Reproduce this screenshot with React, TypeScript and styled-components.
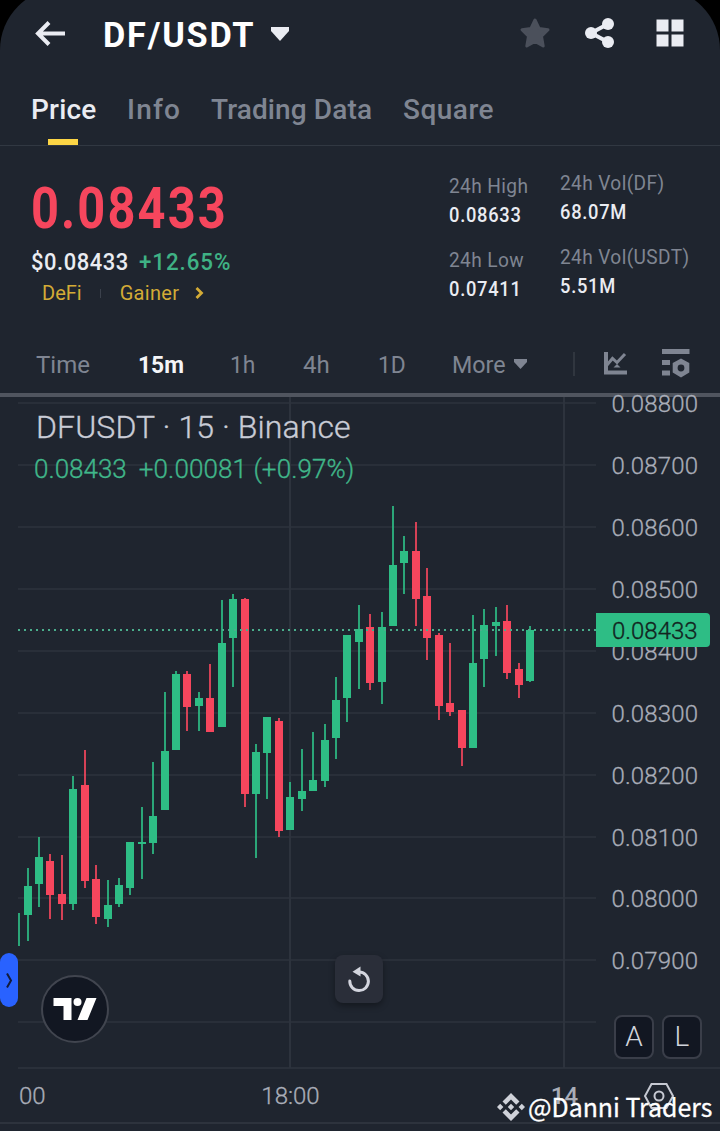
import React from "react";
import styled, { createGlobalStyle } from "styled-components";

const colors = {
  bg: "#1f252f",
  line: "#2d333d",
  text: "#eaecf2",
  muted: "#7f8592",
  axis: "#a9adb8",
  green: "#2ebd85",
  red: "#f6465d",
  yellow: "#fcd545",
  gold: "#d3ab36",
};

const GlobalStyle = createGlobalStyle`
  * { box-sizing: border-box; }
  body { margin: 0; background: #000; }
  svg { display: block; overflow: visible; }
`;

const Root = styled.div`
  width: 720px;
  height: 1131px;
  overflow: hidden;
  background: #000;
  font-family: Roboto, "Liberation Sans", sans-serif;
`;

const Shell = styled.div`
  display: flex;
  flex-direction: column;
  height: 1143px;
  margin-top: -12px;
  padding-top: 12px;
  border-radius: 62px 62px 0 0;
  background: ${colors.bg};
`;

/* Single line label; $stretch narrows or widens the glyphs. */
const Label = styled.span<{
  $size: number;
  $color?: string;
  $weight?: number;
  $spacing?: number;
  $stretch?: number;
}>`
  display: block;
  white-space: pre;
  line-height: 1;
  font-size: ${(p) => p.$size}px;
  color: ${(p) => p.$color ?? colors.text};
  font-weight: ${(p) => p.$weight ?? 400};
  letter-spacing: ${(p) => p.$spacing ?? 0}px;
  transform: scaleX(${(p) => p.$stretch ?? 1});
  transform-origin: left center;
`;

/* Light face with slightly reinforced strokes, used on the chart. */
const ChartLabel = styled(Label)`
  font-weight: 300;
  -webkit-text-stroke: 0.35px currentColor;
`;

const Header = styled.header`
  display: flex;
  align-items: center;
  height: 68px;
  padding: 0 36px 0 34px;
`;

const PairButton = styled.div`
  display: flex;
  align-items: center;
  width: 186px;
  margin-left: 37px;
  justify-content: space-between;
`;

const PairName = styled.div`
  padding-top: 2px;
`;

const HeaderActions = styled.div`
  display: flex;
  align-items: center;
  gap: 34px;
  margin: -2px 0 0 auto;
`;

const GridButton = styled.div`
  margin-left: 7px;
`;

const Tabs = styled.nav`
  display: flex;
  height: 78px;
  padding-left: 31px;
  border-bottom: 1px solid #313842;
`;

const Tab = styled.div<{ $width: number }>`
  display: flex;
  flex-direction: column;
  justify-content: space-between;
  flex: none;
  width: ${(p) => p.$width}px;
  padding-top: 28px;
`;

const Underline = styled.div`
  width: 30px;
  height: 6px;
  margin-left: 17px;
  background: ${colors.yellow};
`;

const Summary = styled.section`
  display: flex;
  height: 186px;
  padding-left: 31px;
`;

const PriceBlock = styled.div`
  width: 418px;
  padding-top: 34px;
`;

const FiatRow = styled.div`
  display: flex;
  margin-top: 13px;
`;

const FiatPrice = styled.div`
  width: 108px;
`;

const TagRow = styled.div`
  display: flex;
  align-items: center;
  margin: 9px 0 0 11px;
`;

const TagDivider = styled.div`
  width: 1px;
  height: 9px;
  margin: 0 19px 0 18px;
  background: #3b414c;
`;

const TagArrow = styled.div`
  margin-left: 16px;
`;

const StatColumn = styled.div<{ $top: number; $width: number }>`
  display: flex;
  flex-direction: column;
  gap: 26px;
  width: ${(p) => p.$width}px;
  padding-top: ${(p) => p.$top}px;
`;

const Stat = styled.div`
  display: flex;
  flex-direction: column;
  gap: 9px;
  height: 48px;
`;

const Intervals = styled.section`
  display: flex;
  align-items: center;
  height: 61px;
  padding: 3px 29px 0 36px;
`;

const Interval = styled.div<{ $width: number }>`
  flex: none;
  width: ${(p) => p.$width}px;
  padding-top: 2px;
`;

const MoreButton = styled.div`
  display: flex;
  align-items: center;
  justify-content: space-between;
  width: 75px;
`;

const MoreText = styled.div`
  padding-top: 2px;
`;

const ToolDivider = styled.div`
  width: 2px;
  height: 24px;
  margin-left: 46px;
  background: #30363f;
`;

const Tools = styled.div`
  display: flex;
  align-items: center;
  justify-content: space-between;
  flex: 1;
  margin: -1px 1px 0 29px;
`;

const Separator = styled.div`
  height: 4px;
  background: #50555f;
  flex: none;
`;

const ChartArea = styled.section`
  position: relative;
  height: 734px;
`;

const Legend = styled.div`
  position: absolute;
  left: 34px;
  top: 14px;
  display: flex;
  flex-direction: column;
  gap: 13px;
`;

const LegendRow = styled.div<{ $indent: number }>`
  display: flex;
  gap: 12px;
  padding-left: ${(p) => p.$indent}px;
`;

const PriceFlag = styled.div`
  position: absolute;
  left: 596px;
  top: 216px;
  display: flex;
  align-items: center;
  width: 114px;
  height: 34px;
  padding: 2px 0 0 16px;
  border-radius: 0 4px 4px 0;
  background: ${colors.green};
`;

const DrawerHandle = styled.div`
  position: absolute;
  left: 0;
  top: 556px;
  display: flex;
  align-items: center;
  justify-content: center;
  width: 18px;
  height: 54px;
  border-radius: 9px;
  background: #2962ff;
`;

const BrandBadge = styled.div`
  position: absolute;
  left: 41px;
  top: 578px;
  display: flex;
  align-items: center;
  justify-content: center;
  width: 68px;
  height: 68px;
  border: 2px solid #41454f;
  border-radius: 50%;
  background: #121722;
`;

const ResetButton = styled.div`
  position: absolute;
  left: 335px;
  top: 558px;
  width: 48px;
  height: 48px;
  border-radius: 8px;
  background: #2a2e39;
  box-shadow: 0 3px 6px rgba(0, 0, 0, 0.35);
`;

const ScaleModes = styled.div`
  position: absolute;
  left: 614px;
  top: 618px;
  display: flex;
  gap: 8px;
`;

const ScaleMode = styled.div`
  display: flex;
  align-items: center;
  justify-content: center;
  width: 40px;
  height: 44px;
  border: 2px solid #3a3e49;
  border-radius: 8px;
  background: #121722;
`;

const Watermark = styled.div`
  position: absolute;
  left: 497px;
  top: 694px;
  display: flex;
  align-items: center;
  gap: 3px;
  height: 32px;
  font-family: "Noto Sans CJK SC", "Noto Sans", sans-serif;
`;

const WatermarkText = styled.div`
  padding-bottom: 2px;
  -webkit-text-stroke: 0.3px #fff;
`;

type Candle = [x: number, high: number, top: number, bottom: number, low: number, up: 0 | 1];

const candles: Candle[] = [
  [28, 868, 886, 915, 941, 1],
  [39, 837, 857, 884, 907, 1],
  [50, 854, 861, 895, 919, 0],
  [62, 855, 894, 904, 920, 0],
  [73, 776, 789, 904, 910, 1],
  [85, 750, 785, 881, 888, 0],
  [96, 865, 879, 917, 924, 0],
  [108, 880, 905, 919, 927, 1],
  [119, 878, 885, 904, 907, 1],
  [130, 842, 842, 888, 895, 1],
  [142, 807, 842, 844, 879, 1],
  [153, 762, 816, 843, 854, 1],
  [165, 692, 751, 810, 810, 1],
  [176, 671, 674, 750, 750, 1],
  [187, 671, 674, 707, 731, 0],
  [199, 692, 698, 706, 731, 1],
  [210, 664, 698, 732, 732, 0],
  [222, 600, 643, 727, 727, 1],
  [233, 594, 599, 638, 687, 1],
  [245, 598, 599, 794, 807, 0],
  [256, 744, 752, 794, 858, 1],
  [267, 717, 717, 753, 799, 1],
  [279, 718, 721, 831, 837, 0],
  [290, 782, 797, 830, 830, 1],
  [302, 749, 791, 799, 811, 1],
  [313, 732, 780, 791, 791, 1],
  [325, 724, 740, 781, 787, 1],
  [336, 677, 700, 738, 759, 1],
  [347, 635, 635, 698, 722, 1],
  [359, 605, 629, 642, 689, 1],
  [370, 614, 627, 683, 690, 0],
  [382, 612, 627, 682, 704, 1],
  [393, 506, 565, 626, 626, 1],
  [404, 536, 551, 563, 594, 1],
  [416, 522, 551, 599, 626, 0],
  [427, 568, 596, 638, 660, 0],
  [439, 633, 635, 706, 720, 0],
  [450, 643, 703, 712, 716, 0],
  [462, 710, 710, 748, 766, 0],
  [473, 615, 663, 748, 748, 1],
  [484, 609, 625, 659, 687, 1],
  [496, 607, 622, 626, 656, 1],
  [507, 605, 621, 673, 679, 0],
  [519, 663, 669, 685, 698, 0],
  [530, 626, 630, 681, 682, 1],
];

const levels: [number, string][] = [
  [403, "0.08800"],
  [465, "0.08700"],
  [527, "0.08600"],
  [589, "0.08500"],
  [651, "0.08400"],
  [713, "0.08300"],
  [775, "0.08200"],
  [837, "0.08100"],
  [898, "0.08000"],
  [960, "0.07900"],
  [1022, ""],
];

const AxisText = styled.text<{ $bold?: boolean }>`
  font-family: Roboto, sans-serif;
  font-size: 24px;
  font-weight: ${(p) => (p.$bold ? 500 : 300)};
  fill: ${colors.axis};
  stroke: ${colors.axis};
  stroke-width: ${(p) => (p.$bold ? 0 : 0.3)}px;
`;

const Chart = () => (
  <svg width="720" height="734" viewBox="0 397 720 734">
    <g fill={colors.line}>
      {levels.map(([y]) => (
        <rect key={y} x="18" y={y - 1} width="578" height="2" opacity="0.75" />
      ))}
      <rect x="289" y="397" width="2" height="671" />
      <rect x="563" y="397" width="2" height="671" />
      <rect x="18" y="1067" width="702" height="2" opacity="0.8" />
      <rect x="0" y="1122" width="720" height="2" />
    </g>
    {levels.map(([y, label]) => (
      <AxisText key={y} x="611.5" y={y + 9} textLength={label ? 86.5 : undefined}>
        {label}
      </AxisText>
    ))}
    <rect x="18" y="913" width="2" height="33" fill={colors.green} opacity="0.85" />
    {candles.map(([x, high, top, bottom, low, up]) => (
      <g key={x} fill={up ? colors.green : colors.red}>
        <rect x={x - 1} y={high} width="2" height={low - high} opacity="0.85" />
        <rect x={x - 4} y={top} width="8" height={bottom - top} />
      </g>
    ))}
    <path d="M18 630H596" stroke="#4aae8c" strokeWidth="2" strokeDasharray="2 4" />
    <AxisText x="19" y="1104">00</AxisText>
    <AxisText x="290.5" y="1104" textAnchor="middle">18:00</AxisText>
    <AxisText $bold x="564.5" y="1104" textAnchor="middle">14</AxisText>
    <g fill="none" stroke="#c6c9d2" strokeWidth="2">
      <path d="M651.5 1084h15l6.500 12-6.500 12h-15l-6.500-12z" />
      <circle cx="659" cy="1096" r="4.500" />
    </g>
  </svg>
);

const BackIcon = () => (
  <svg width="32" height="26" viewBox="0 0 32 26" fill="none" stroke={colors.text} strokeWidth="4">
    <path d="M4 12.500H31M15 1.500L4 12.500L15 23.500" />
  </svg>
);

const StarIcon = () => (
  <svg width="32" height="32" viewBox="0 0 32 32">
    <path
      d="M16 3L20 11.500L29 12.700L22.500 19.300L24.200 29L16 24.500L7.800 29L9.500 19.300L3 12.700L12 11.500Z"
      fill="#4b505b"
      stroke="#4b505b"
      strokeWidth="3"
      strokeLinejoin="round"
    />
  </svg>
);

const ShareIcon = () => (
  <svg width="30" height="32" viewBox="0 0 30 32" fill={colors.text}>
    <path d="M23 7L6 16L23 25" fill="none" stroke={colors.text} strokeWidth="4" />
    <circle cx="23" cy="7" r="6" />
    <circle cx="6" cy="16" r="6" />
    <circle cx="23" cy="25" r="6" />
  </svg>
);

const GridIcon = () => (
  <svg width="28" height="28" viewBox="0 0 28 28" fill={colors.text}>
    <path d="M.500.500h12v12H.500zM15.500.500h12v12h-12zM.500 15.500h12v12H.500zM15.500 15.500h12v12h-12z" />
  </svg>
);

const CaretIcon = ({ width, color }: { width: number; color: string }) => (
  <svg width={width} height={width * 0.78} viewBox="0 0 18 14">
    <path d="M0 0H18V4L9 14L0 4Z" fill={color} />
  </svg>
);

const LineChartIcon = () => (
  <svg width="23" height="23" viewBox="0 0 23 23" fill="none" stroke={colors.muted}>
    <path d="M2 0V20.500H23" strokeWidth="4" />
    <path d="M3 13L8.500 6.500L13 10.500L21 2" strokeWidth="3" />
    <path d="M9.500 15.500L13 12L16.500 15.500Z" fill={colors.muted} stroke="none" />
  </svg>
);

const SettingsIcon = () => (
  <svg width="29" height="29" viewBox="0 0 29 29" fill={colors.muted}>
    <path d="M1 0h27.500v5H1zM1 11h8v5H1zM1 21.500h8v5H1z" />
    <path
      fillRule="evenodd"
      d="M20 9.500L28.300 14V23.500L20 28.500L11.700 23.500V14ZM20 15.600A3.400 3.400 0 1 0 20 22.400A3.400 3.400 0 1 0 20 15.600Z"
    />
  </svg>
);

const ChevronIcon = () => (
  <svg width="9" height="12" viewBox="0 0 9 12" fill="none" stroke={colors.gold} strokeWidth="2.800">
    <path d="M1.500 1L6.500 6L1.500 11" />
  </svg>
);

const HandleArrow = () => (
  <svg width="6" height="15" viewBox="0 0 6 15" fill="none" stroke="#131c3c" strokeWidth="2">
    <path d="M1 .500L5 7.500L1 14.500" />
  </svg>
);

const BrandLogo = () => (
  <svg width="44" height="22" viewBox="0 0 44 22" fill="#fff">
    <path d="M.500 0H18.500V22H10.500V8H.500ZM33.500 0H43.500L34.500 22H24.500Z" />
    <circle cx="24.500" cy="4" r="4" />
  </svg>
);

const ResetIcon = () => (
  <svg width="48" height="48" viewBox="0 0 48 48">
    <path
      d="M24 17A9.300 9.300 0 1 1 14.800 26"
      fill="none"
      stroke="#d3d5de"
      strokeWidth="3"
      strokeLinecap="round"
    />
    <path d="M25.500 11.500V21.500L17.500 16.800Z" fill="#d3d5de" />
  </svg>
);

const DiamondLogo = () => (
  <svg width="28" height="28" viewBox="0 0 28 28" fill="#cfd2d9">
    <path d="M14 0L22.500 8.500L19.200 11.700L14 6.500L8.800 11.700L5.500 8.500Z" />
    <path d="M14 28L22.500 19.500L19.200 16.300L14 21.500L8.800 16.300L5.500 19.500Z" />
    <path d="M14 10.800L17.200 14L14 17.200L10.800 14ZM3.200 10.800L6.400 14L3.200 17.200L0 14ZM24.800 10.800L28 14L24.800 17.200L21.600 14Z" />
  </svg>
);

const StatItem = ({ label, value }: { label: string; value: string }) => (
  <Stat>
    <Label $size={20} $color={colors.muted} $spacing={0.4} $stretch={0.955}>{label}</Label>
    <Label $size={20} $weight={500} $spacing={0.8} $stretch={0.915}>{value}</Label>
  </Stat>
);

export default function App() {
  return (
    <Root>
      <GlobalStyle />
      <Shell>
        <Header>
          <BackIcon />
          <PairButton>
            <PairName>
              <Label $size={35} $weight={700} $color="#fff" $spacing={1.8} $stretch={0.98}>DF/USDT</Label>
            </PairName>
            <CaretIcon width={18} color={colors.text} />
          </PairButton>
          <HeaderActions>
            <StarIcon />
            <ShareIcon />
            <GridButton>
              <GridIcon />
            </GridButton>
          </HeaderActions>
        </Header>
        <Tabs>
          <Tab $width={96}>
            <Label $size={28} $weight={500} $spacing={0.2}>Price</Label>
            <Underline />
          </Tab>
          <Tab $width={84}>
            <Label $size={28} $weight={500} $spacing={1.2} $color={colors.muted}>Info</Label>
          </Tab>
          <Tab $width={192}>
            <Label $size={28} $weight={500} $spacing={0.12} $color={colors.muted}>Trading Data</Label>
          </Tab>
          <Tab $width={100}>
            <Label $size={28} $weight={500} $spacing={0.5} $color={colors.muted}>Square</Label>
          </Tab>
        </Tabs>
        <Summary>
          <PriceBlock>
            <Label $size={57} $weight={700} $color={colors.red} $spacing={2.5} $stretch={0.855}>0.08433</Label>
            <FiatRow>
              <FiatPrice>
                <Label $size={24} $weight={500} $spacing={0.6} $stretch={0.915}>$0.08433</Label>
              </FiatPrice>
              <Label $size={24} $weight={500} $color="#3fb285" $spacing={1} $stretch={0.93}>+12.65%</Label>
            </FiatRow>
            <TagRow>
              <Label $size={20} $color={colors.gold}>DeFi</Label>
              <TagDivider />
              <Label $size={20} $color={colors.gold} $spacing={0.3}>Gainer</Label>
              <TagArrow>
                <ChevronIcon />
              </TagArrow>
            </TagRow>
          </PriceBlock>
          <StatColumn $top={30} $width={111}>
            <StatItem label="24h High" value="0.08633" />
            <StatItem label="24h Low" value="0.07411" />
          </StatColumn>
          <StatColumn $top={27} $width={150}>
            <StatItem label="24h Vol(DF)" value="68.07M" />
            <StatItem label="24h Vol(USDT)" value="5.51M" />
          </StatColumn>
        </Summary>
        <Intervals>
          <Interval $width={102}>
            <Label $size={24} $color={colors.muted}>Time</Label>
          </Interval>
          <Interval $width={92}>
            <Label $size={24} $weight={700} $color="#f4f5f8" $stretch={0.95}>15m</Label>
          </Interval>
          <Interval $width={73}>
            <Label $size={24} $color={colors.muted} $stretch={0.95}>1h</Label>
          </Interval>
          <Interval $width={75}>
            <Label $size={24} $color={colors.muted}>4h</Label>
          </Interval>
          <Interval $width={74}>
            <Label $size={24} $color={colors.muted} $stretch={0.95}>1D</Label>
          </Interval>
          <MoreButton>
            <MoreText>
              <Label $size={24} $color={colors.muted} $stretch={0.97}>More</Label>
            </MoreText>
            <CaretIcon width={13} color={colors.muted} />
          </MoreButton>
          <ToolDivider />
          <Tools>
            <LineChartIcon />
            <SettingsIcon />
          </Tools>
        </Intervals>
        <Separator />
        <ChartArea>
          <Chart />
          <Legend>
            <LegendRow $indent={2}>
              <ChartLabel $size={32} $color="#c9ccd6" $spacing={0.1}>DFUSDT · 15 · Binance</ChartLabel>
            </LegendRow>
            <LegendRow $indent={0}>
              <ChartLabel $size={26} $color="#40b78a">0.08433</ChartLabel>
              <ChartLabel $size={26} $color="#40b78a" $spacing={0.1}>+0.00081 (+0.97%)</ChartLabel>
            </LegendRow>
          </Legend>
          <PriceFlag>
            <ChartLabel $size={24} $color="#12241f">0.08433</ChartLabel>
          </PriceFlag>
          <DrawerHandle>
            <HandleArrow />
          </DrawerHandle>
          <BrandBadge>
            <BrandLogo />
          </BrandBadge>
          <ResetButton>
            <ResetIcon />
          </ResetButton>
          <ScaleModes>
            <ScaleMode>
              <Label $size={28} $weight={300} $color="#d1d4dc">A</Label>
            </ScaleMode>
            <ScaleMode>
              <Label $size={28} $weight={300} $color="#d1d4dc">L</Label>
            </ScaleMode>
          </ScaleModes>
          <Watermark>
            <DiamondLogo />
            <WatermarkText>
              <Label $size={25} $color="#fff" $stretch={0.995}>@Danni Traders</Label>
            </WatermarkText>
          </Watermark>
        </ChartArea>
      </Shell>
    </Root>
  );
}
